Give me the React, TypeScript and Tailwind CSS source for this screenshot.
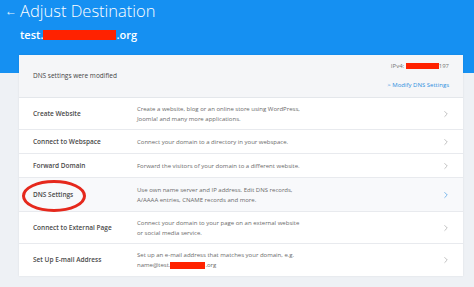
import { ChevronRight } from "lucide-react";

type Row = {
  title: string;
  desc: React.ReactNode;
  h: string;
  active?: boolean;
};

const Redacted = ({ className }: { className: string }) => (
  <span className={`inline-block bg-[#ff2200] align-middle ${className}`} />
);

const rows: Row[] = [
  {
    title: "Create Website",
    desc: (
      <>
        Create a website, blog or an online store using WordPress,
        <br />
        Joomla! and many more applications.
      </>
    ),
    h: "h-[32px]"
  },
  {
    title: "Connect to Webspace",
    desc: "Connect your domain to a directory in your webspace.",
    h: "h-[24px]"
  },
  {
    title: "Forward Domain",
    desc: "Forward the visitors of your domain to a different website.",
    h: "h-[24px]"
  },
  {
    title: "DNS Settings",
    desc: (
      <>
        Use own name server and IP address. Edit DNS records,
        <br />
        A/AAAA entries, CNAME records and more.
      </>
    ),
    h: "h-[34px]",
    active: true
  },
  {
    title: "Connect to External Page",
    desc: (
      <>
        Connect your domain to your page on an external website
        <br />
        or social media service.
      </>
    ),
    h: "h-[32px]"
  },
  {
    title: "Set Up E-mail Address",
    desc: (
      <>
        Set up an e-mail address that matches your domain, e.g.
        <br />
        name@test.
        <Redacted className="h-[7px] w-[35px]" />
        .org
      </>
    ),
    h: "h-[32px]"
  }
];

export default function App() {
  return (
    <div
      className="relative h-[287px] w-[474px] overflow-hidden bg-[#eef1f5]"
      style={{ fontFamily: '"Open Sans", "Liberation Sans", sans-serif' }}
    >
      <header className="h-[73px] bg-[#1590f2] text-white">
        <div className="flex items-center pt-[1px]">
          <span className="w-[20px] pl-[5px] text-[12px] leading-[20px] text-white/90">←</span>
          <h1 className="text-[16.5px] font-light leading-[20px]">Adjust Destination</h1>
        </div>
        <p className="mt-[7px] pl-[20px] text-[11px] font-semibold leading-[14px]">
          test.
          <Redacted className="h-[10px] w-[73px] -mt-[2px]" />
          .org
        </p>
      </header>

      <section className="relative -mt-[18px] ml-[19px] w-[444px] bg-white shadow-[0_0_2px_rgba(0,0,0,0.08)]">
        <div className="flex h-[43px] items-center justify-between border-b border-[#e4e7eb] bg-[#f5f6f8] pl-[14px] pr-[14px]">
          <span className="text-[6.5px] text-[#444]">DNS settings were modified</span>
          <div className="flex flex-col items-end gap-[10px] text-[6px]">
            <span className="text-[#777]">
              IPv4: <Redacted className="h-[6px] w-[33px]" />
              197
            </span>
            <span className="text-[#2d8ee0]">&gt; Modify DNS Settings</span>
          </div>
        </div>

        {rows.map((row, i) => (
          <div
            key={row.title}
            className={`flex items-center ${row.h} ${
              i < rows.length - 1 ? "border-b border-[#e8eaee]" : ""
            } ${row.active ? "bg-[#f8f9fb]" : "bg-white"}`}
          >
            <span className="w-[118px] pl-[14px] text-[6.5px] font-semibold text-[#4a4a4a]">
              {row.title}
            </span>
            <span className="flex-1 text-[6px] leading-[10px] text-[#6b6b6b]">{row.desc}</span>
            <ChevronRight
              className={`mr-[12px] h-[10px] w-[10px] ${row.active ? "text-[#2d8ee0]" : "text-[#9a9a9a]"}`}
              strokeWidth={1.5}
            />
          </div>
        ))}
      </section>

      {/* red annotation circle */}
      <svg className="absolute left-[21px] top-[179px]" width="66" height="34" viewBox="0 0 66 34">
        <ellipse cx="33" cy="17" rx="30.5" ry="14.5" fill="none" stroke="#e5281c" strokeWidth="3" />
      </svg>
    </div>
  );
}
